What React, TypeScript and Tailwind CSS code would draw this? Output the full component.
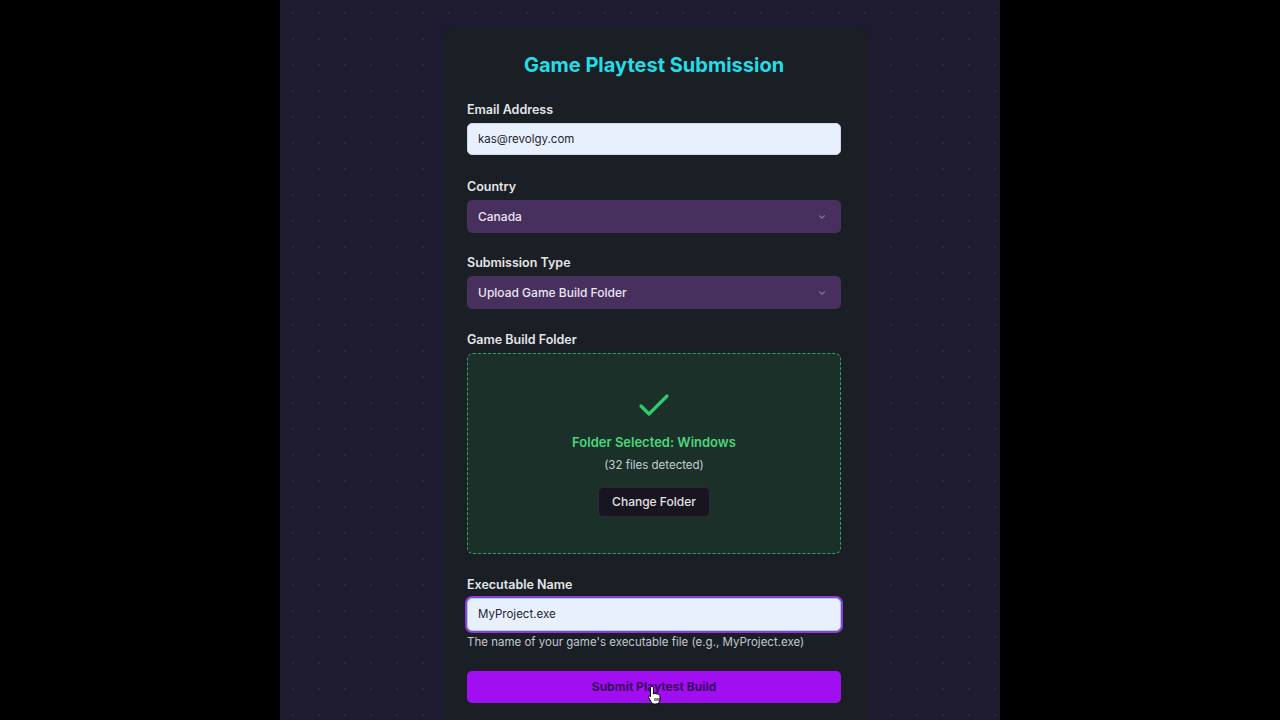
import React from "react";

function Chevron() {
  return (
    <svg width="10" height="10" viewBox="0 0 24 24" fill="none" stroke="#9f8bb5" strokeWidth="2.5" strokeLinecap="round" strokeLinejoin="round">
      <path d="M6 9l6 6 6-6" />
    </svg>
  );
}

function Label({ children }: { children: React.ReactNode }) {
  return <div className="text-[12.5px] leading-[18px] font-semibold text-[#e4e6ea] mb-[4px]">{children}</div>;
}

function SelectBox({ value }: { value: string }) {
  return (
    <div className="h-[33px] rounded-[5px] bg-[#472f5e] flex items-center justify-between pl-[11px] pr-[14px]">
      <span className="text-[12px] font-medium text-[#ece6f2]">{value}</span>
      <Chevron />
    </div>
  );
}

export default function App() {
  return (
    <div className="w-full h-[720px] bg-black flex overflow-hidden" style={{ fontFamily: "Inter, 'Noto Sans', sans-serif" }}>
      <div className="ml-[280px] w-[720px] h-full bg-[#1e1a30] bg-[radial-gradient(circle,rgba(140,90,170,0.16)_1px,transparent_1.5px)] bg-[size:26px_26px] pl-[163px] pt-[27px]">
        <div className="w-[424px] h-[720px] bg-[#1a1e25] rounded-t-[8px] pl-[24px] pr-[26px] pt-[24px]">
          <h1 className="text-center text-[20px] leading-[28px] font-bold text-[#22dde6] mb-[22px]">Game Playtest Submission</h1>

          <Label>Email Address</Label>
          <div className="h-[32px] rounded-[5px] bg-[#e8f0fd] border border-[#cfd8e6] flex items-center px-[10px] pt-[2px] mb-[23px]">
            <span className="text-[11.5px] text-[#1f2430]">kas@revolgy.com</span>
          </div>

          <Label>Country</Label>
          <div className="mb-[21px]">
            <SelectBox value="Canada" />
          </div>

          <Label>Submission Type</Label>
          <div className="mb-[22px]">
            <SelectBox value="Upload Game Build Folder" />
          </div>

          <Label>Game Build Folder</Label>
          <div className="h-[201px] rounded-[6px] border border-dashed border-[#2fa36a] bg-[#1a3029] flex flex-col items-center pt-[37px] mb-[22px]">
            <svg width="34" height="30" viewBox="0 0 34 30" fill="none" stroke="#2ecc6a" strokeWidth="3.2" strokeLinecap="round" strokeLinejoin="round">
              <path d="M4 15l8 8L30 5" />
            </svg>
            <div className="mt-[12px] text-[13px] leading-[18px] font-semibold text-[#4ad67c]">Folder Selected: Windows</div>
            <div className="mt-[6px] text-[11.5px] leading-[16px] text-[#c9cdd3]">(32 files detected)</div>
            <div className="mt-[14px] h-[30px] px-[13px] rounded-[5px] bg-[#181420] border border-[#2c2a36] flex items-center">
              <span className="text-[12px] font-medium text-[#e2e2e8]">Change Folder</span>
            </div>
          </div>

          <Label>Executable Name</Label>
          <div className="h-[33px] rounded-[5px] bg-[#e8f0fd] border border-[#7fe3e8] ring-2 ring-[#9b35d6] flex items-center px-[10px] pt-[1px]">
            <span className="text-[11.5px] text-[#1f2430]">MyProject.exe</span>
          </div>
          <div className="mt-[3px] text-[11.5px] leading-[16px] text-[#c4c7cd]">The name of your game's executable file (e.g., MyProject.exe)</div>

          <div className="relative mt-[21px] h-[32px] rounded-[5px] bg-[#a20ef2] flex items-center justify-center">
            <span className="text-[12px] font-bold text-[#3a0a5c]">Submit Playtest Build</span>
            <svg className="absolute left-[180px] top-[14px]" width="16" height="20" viewBox="0 0 16 20">
              <path d="M5 1.5c.9 0 1.5.6 1.5 1.5v6l.6-.1c.5-.6 1.7-.6 2.1.2.6-.4 1.6-.3 2 .4.7-.3 1.8 0 1.8 1.2v3.8c0 2.3-1.4 4.5-4 4.5H7.3c-1.3 0-2.300-.7-3-1.8L1.6 12.6c-.5-.8.3-1.9 1.3-1.4l.6.4V3c0-.9.6-1.5 1.5-1.5z" fill="#fff" stroke="#000" strokeWidth="1" />
              <path d="M8 13v3M10 13v3M12 13v3" stroke="#000" strokeWidth="0.9" />
            </svg>
          </div>
        </div>
      </div>
    </div>
  );
}
